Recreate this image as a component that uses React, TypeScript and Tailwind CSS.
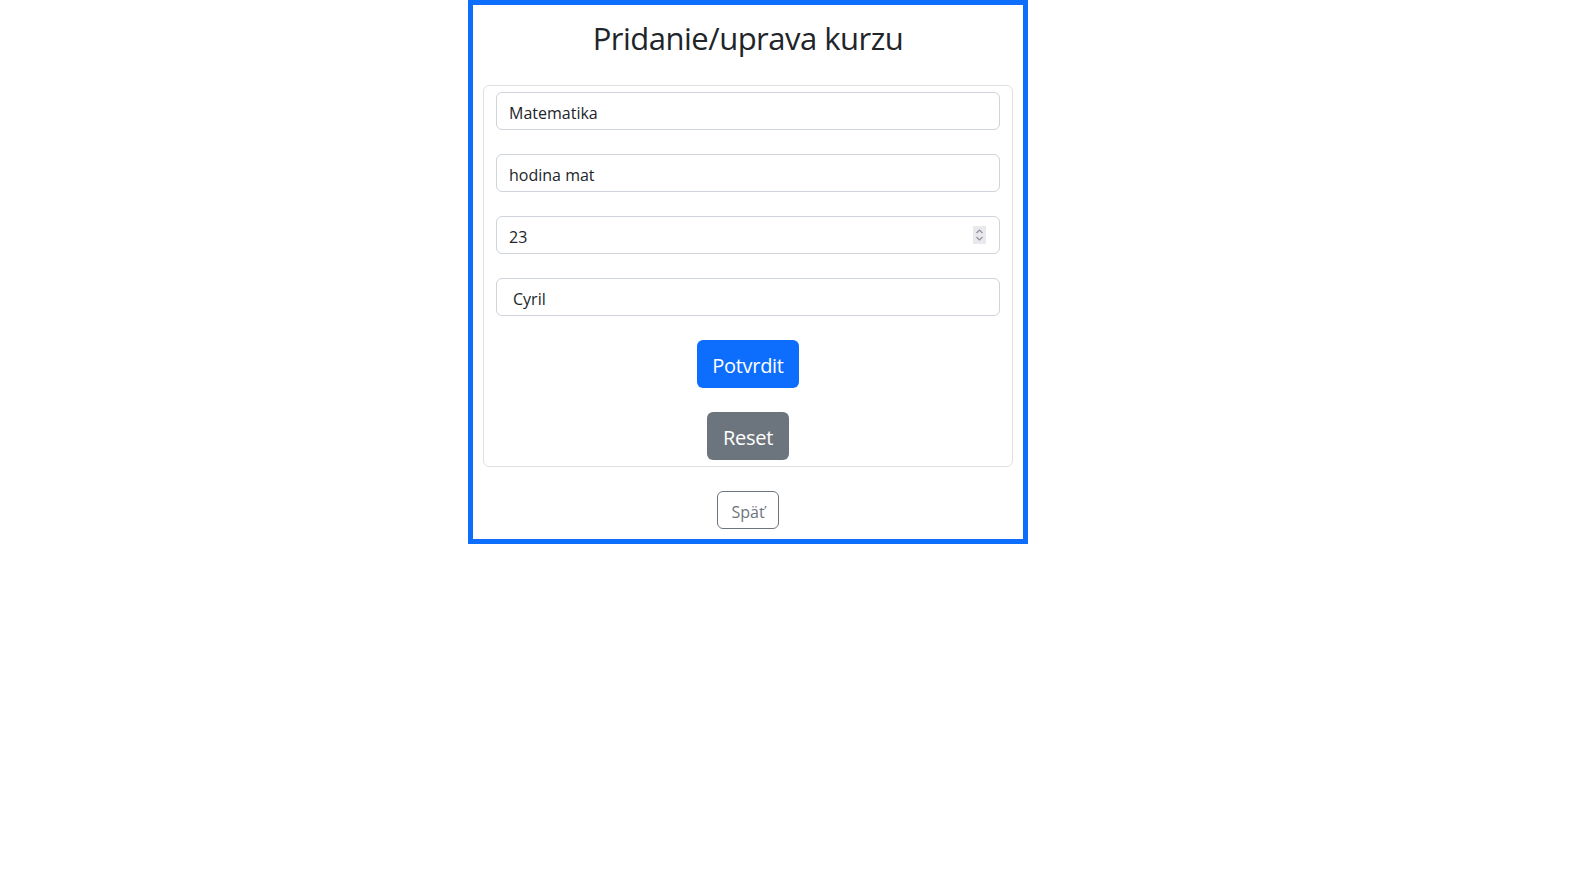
import { useState } from 'react'

// ─── Form field — bootstrap-like text input ──────────────────────────────────

function Field({ value, indent = false }: { value: string; indent?: boolean }) {
  return (
    <input
      readOnly
      value={value}
      className={
        'block h-[38px] w-full rounded-[6px] border border-[#ced4da] bg-white pt-[3px] text-[16px] text-[#212529] outline-none ' +
        (indent ? 'pl-[16px] pr-3' : 'px-3')
      }
    />
  )
}

function NumberField({ value }: { value: string }) {
  return (
    <div className="flex h-[38px] w-full items-center rounded-[6px] border border-[#ced4da] bg-white pl-3 pr-[13px]">
      <input readOnly value={value} className="min-w-0 flex-1 bg-transparent pt-[3px] text-[16px] text-[#212529] outline-none" />
      <span className="flex h-[18px] w-[13px] flex-col items-center justify-center bg-[#e9e9ed]">
        <svg width="9" height="14" viewBox="0 0 9 14" fill="none" stroke="#8f8f9d" strokeWidth={1.2} aria-hidden="true">
          <path d="M1.5 5l3-3 3 3" />
          <path d="M1.5 9l3 3 3-3" />
        </svg>
      </span>
    </div>
  )
}

export default function App() {
  const [course] = useState({ name: 'Matematika', desc: 'hodina mat', capacity: '23', teacher: 'Cyril' })

  return (
    <div className="min-h-screen bg-white" style={{ fontFamily: '"Open Sans", "Noto Sans", sans-serif' }}>
      <div className="ml-[468px] box-border w-[560px] border-[5px] border-[#0d6efd] px-[10px] pb-[10px]">
        <h2 className="mt-[14px] mb-[28px] text-center text-[31px] font-normal leading-[38px] tracking-[-0.5px] text-[#212529]">
          Pridanie/uprava kurzu
        </h2>

        <div className="flex flex-col gap-6 rounded-[6px] border border-[#dee2e6] px-3 pt-[6px] pb-[6px]">
          <Field value={course.name} />
          <Field value={course.desc} />
          <NumberField value={course.capacity} />
          <Field value={course.teacher} indent />

          <div className="flex justify-center">
            <button className="flex h-[48px] w-[102px] items-center justify-center rounded-[6px] bg-[#0d6efd] pt-[4px] text-[20px] tracking-[-0.3px] text-white">
              Potvrdit
            </button>
          </div>
          <div className="flex justify-center">
            <button className="flex h-[48px] w-[82px] items-center justify-center rounded-[6px] bg-[#6c757d] pt-[4px] text-[20px] tracking-[-0.3px] text-white">
              Reset
            </button>
          </div>
        </div>

        <div className="mt-6 flex justify-center">
          <button className="flex h-[38px] w-[62px] items-center justify-center rounded-[6px] border border-[#6c757d] bg-white pt-[3px] text-[16px] text-[#6c757d]">
            Späť
          </button>
        </div>
      </div>
    </div>
  )
}
